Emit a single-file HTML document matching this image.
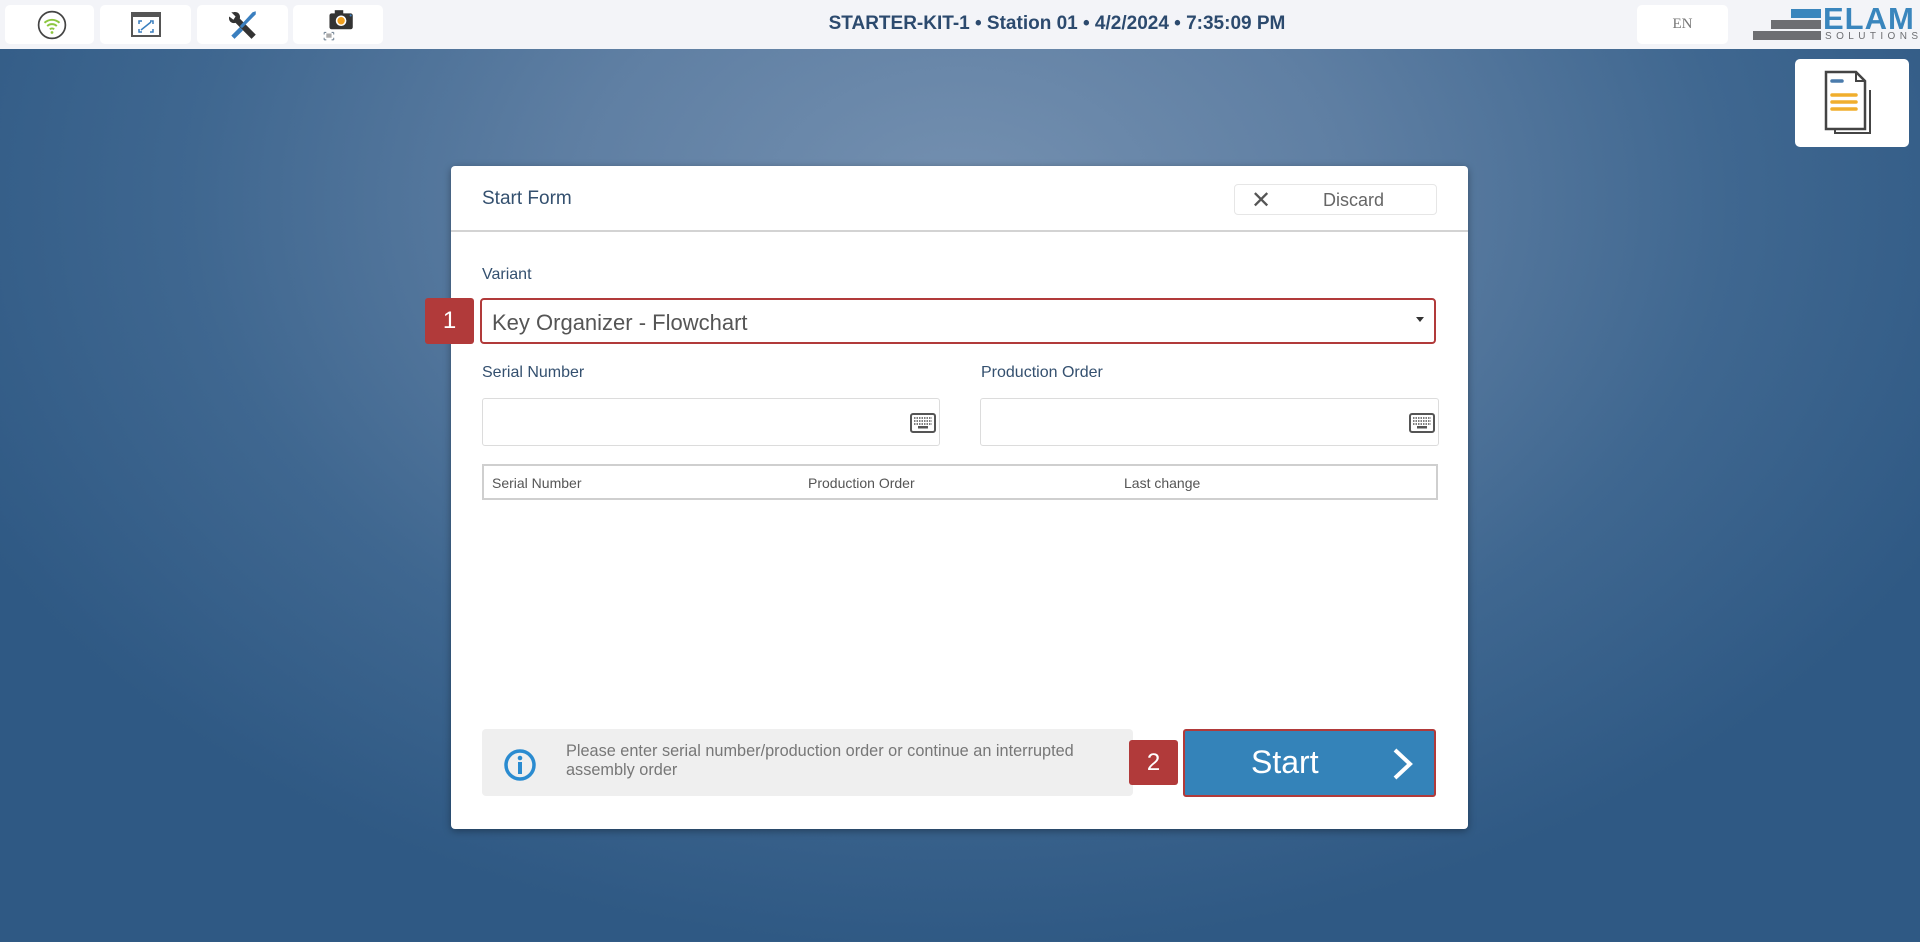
<!DOCTYPE html>
<html><head><style>
*{box-sizing:border-box;margin:0;padding:0}
body{width:1920px;height:942px;overflow:hidden;font-family:"Liberation Sans",sans-serif;background:radial-gradient(ellipse 1100px 750px at 960px 200px,#7490b0 0%,#5f7fa3 35%,#3f6790 70%,#2f5984 100%);position:relative}
.top{position:absolute;left:0;top:0;width:1920px;height:49px;background:#f3f4f8}
.tb{position:absolute;top:5px;height:39px;background:#fff;border-radius:5px}
.title{position:absolute;top:13px;left:0;width:2114px;text-align:center;font-weight:bold;font-size:19px;color:#2c4a6e}
.card{position:absolute;left:451px;top:166px;width:1017px;height:663px;background:#fff;border-radius:4px;box-shadow:0 2px 8px rgba(0,0,0,.35)}
.abs{position:absolute}
.lbl{position:absolute;font-size:16px;color:#34506f}
.badge{position:absolute;background:#b13a3a;color:#fff;border-radius:3px;text-align:center;font-size:24px}
.inp{position:absolute;border:1px solid #dcdcdc;border-radius:3px;background:#fff}
</style></head><body>
<div class="top">
<div class="tb" style="left:5px;width:89px"><svg class="abs" style="left:32px;top:5px" width="30" height="30" viewBox="0 0 28 28"><circle cx="14" cy="14" r="12.5" fill="none" stroke="#444" stroke-width="1.6"/><path d="M7 12a10 10 0 0 1 14 0M9.5 15a6.5 6.5 0 0 1 9 0M12 18a3 3 0 0 1 4 0" fill="none" stroke="#8cc63f" stroke-width="1.8"/><circle cx="14" cy="21" r="1.3" fill="#8cc63f"/></svg></div>
<div class="tb" style="left:100px;width:91px"><svg class="abs" style="left:31px;top:7px" width="30" height="25" viewBox="0 0 30 25"><rect x="1" y="1" width="28" height="23" fill="none" stroke="#555" stroke-width="2"/><rect x="1" y="1" width="28" height="4" fill="#555"/><path d="M8 12v-3h3M19 9h3v3M22 17v3h-3M11 20H8v-3M10 18l10-8" fill="none" stroke="#3a7fbf" stroke-width="1.5"/></svg></div>
<div class="tb" style="left:197px;width:91px"><svg class="abs" style="left:29px;top:3px" width="34" height="34" viewBox="0 0 32 32"><path d="M5 4l4 4-2 3-4-3c-1 4 2 7 6 6l15 15 4-4L13 10c1-4-2-7-6-6z" fill="#333"/><path d="M28 3l-3 1-12 13 2 2L28 6z" fill="#3a7fbf"/><path d="M13 18l-8 8 3 3 8-8z" fill="#3a7fbf"/></svg></div>
<div class="tb" style="left:293px;width:90px"><svg class="abs" style="left:28px;top:2px" width="36" height="36" viewBox="0 0 34 34"><rect x="8" y="6" width="22" height="15" rx="2" fill="#333"/><rect x="13" y="3" width="8" height="4" fill="#333"/><circle cx="19" cy="13" r="5" fill="#fff"/><circle cx="19" cy="13" r="3.5" fill="#f0a020"/><circle cx="28" cy="8" r="1" fill="#3a7fbf"/><path d="M3 24h2M3 24v2M12 24h-2M12 24v2M3 31h2M3 31v-2M12 31h-2M12 31v-2" stroke="#789" stroke-width="1"/><rect x="5" y="25" width="5" height="4" fill="#aaa"/></svg></div>
<div class="title">STARTER-KIT-1 • Station 01 • 4/2/2024 • 7:35:09 PM</div>
<div class="tb" style="left:1637px;width:91px;text-align:center;line-height:39px;font-family:'Liberation Serif',serif;font-size:15px;color:#777">EN</div>
<div class="abs" style="left:1791px;top:9px;width:30px;height:9px;background:#3a86bd"></div>
<div class="abs" style="left:1771px;top:20px;width:50px;height:9px;background:#6d6e72"></div>
<div class="abs" style="left:1753px;top:31px;width:68px;height:9px;background:#6d6e72"></div>
<div class="abs" style="left:1823px;top:6px;font-size:31px;font-weight:bold;color:#3a86bd;line-height:26px;letter-spacing:1px">ELAM</div>
<div class="abs" style="left:1825px;top:31px;font-size:10px;color:#6d6e72;letter-spacing:4.4px">SOLUTIONS</div>
</div>
<div class="abs" style="left:1795px;top:59px;width:114px;height:88px;background:#fff;border-radius:5px">
<svg class="abs" style="left:29px;top:11px" width="58" height="66" viewBox="0 0 58 66"><path d="M46 20v43H11v-4" fill="none" stroke="#444" stroke-width="2"/><path d="M2 2h30l9 9v48H2z" fill="#fff" stroke="#444" stroke-width="2.5"/><path d="M32 2v9h9" fill="none" stroke="#444" stroke-width="2"/><path d="M8 11h10" stroke="#4a7bac" stroke-width="3.5" stroke-linecap="round"/><path d="M8 25h24M8 32h24M8 39h24" stroke="#f0ae2d" stroke-width="3.5" stroke-linecap="round"/></svg>
</div>
<div class="card">
<div class="lbl" style="left:31px;top:22px;font-size:19px">Start Form</div>
<div class="abs" style="left:783px;top:18px;width:203px;height:31px;border:1px solid #e6e6e6;border-radius:4px"><span class="abs" style="left:16px;top:1px;font-size:24px;color:#555">✕</span><span class="abs" style="left:88px;top:5px;font-size:18px;color:#666">Discard</span></div>
<div class="abs" style="left:0;top:64px;width:1017px;height:2px;background:#d3d3d3"></div>
<div class="lbl" style="left:31px;top:100px">Variant</div>
<div class="abs" style="left:29px;top:132px;width:956px;height:46px;border:2px solid #b13a3a;border-radius:4px"><span class="abs" style="left:10px;top:10px;font-size:22px;color:#555">Key Organizer - Flowchart</span><span class="abs" style="right:10px;top:17px;border:4px solid transparent;border-top:5px solid #333"></span></div>
<div class="badge" style="left:-26px;top:132px;width:49px;height:46px;line-height:46px">1</div>
<div class="lbl" style="left:31px;top:198px">Serial Number</div>
<div class="lbl" style="left:530px;top:198px">Production Order</div>
<div class="inp" style="left:31px;top:232px;width:458px;height:48px"><svg class="abs" style="right:3px;top:14px" width="26" height="20" viewBox="0 0 26 20"><rect x="1" y="1" width="24" height="18" rx="2" fill="#fff" stroke="#555" stroke-width="2"/><path d="M4 5h18M4 8h18M4 11h18" stroke="#555" stroke-width="1.6" stroke-dasharray="1.5 1"/><rect x="8" y="13" width="10" height="2.5" fill="#555"/></svg></div>
<div class="inp" style="left:529px;top:232px;width:459px;height:48px"><svg class="abs" style="right:3px;top:14px" width="26" height="20" viewBox="0 0 26 20"><rect x="1" y="1" width="24" height="18" rx="2" fill="#fff" stroke="#555" stroke-width="2"/><path d="M4 5h18M4 8h18M4 11h18" stroke="#555" stroke-width="1.6" stroke-dasharray="1.5 1"/><rect x="8" y="13" width="10" height="2.5" fill="#555"/></svg></div>
<div class="abs" style="left:31px;top:298px;width:956px;height:36px;border:2px solid #cfcfcf;font-size:14px;color:#555">
<span class="abs" style="left:8px;top:9px">Serial Number</span><span class="abs" style="left:324px;top:9px">Production Order</span><span class="abs" style="left:640px;top:9px">Last change</span></div>
<div class="abs" style="left:31px;top:563px;width:651px;height:67px;background:#efefef;border-radius:4px">
<svg class="abs" style="left:21px;top:19px" width="34" height="34" viewBox="0 0 34 34"><circle cx="17" cy="17" r="14" fill="none" stroke="#2a8bd0" stroke-width="3.5"/><circle cx="17" cy="10" r="2.3" fill="#2a8bd0"/><rect x="15" y="14" width="4" height="12" fill="#2a8bd0"/></svg>
<div class="abs" style="left:84px;top:13px;font-size:16.3px;line-height:19px;color:#777;width:560px">Please enter serial number/production order or continue an interrupted assembly order</div></div>
<div class="badge" style="left:678px;top:574px;width:49px;height:45px;line-height:45px">2</div>
<div class="abs" style="left:732px;top:563px;width:253px;height:68px;background:#3483b9;border:2px solid #b13a3a;border-radius:3px"><span class="abs" style="left:66px;top:13px;font-size:32px;color:#fff">Start</span><svg class="abs" style="left:206px;top:17px" width="24" height="32" viewBox="0 0 24 32"><path d="M4 2l15 14-15 14" fill="none" stroke="#fff" stroke-width="4"/></svg></div>
</div>
</body></html>
